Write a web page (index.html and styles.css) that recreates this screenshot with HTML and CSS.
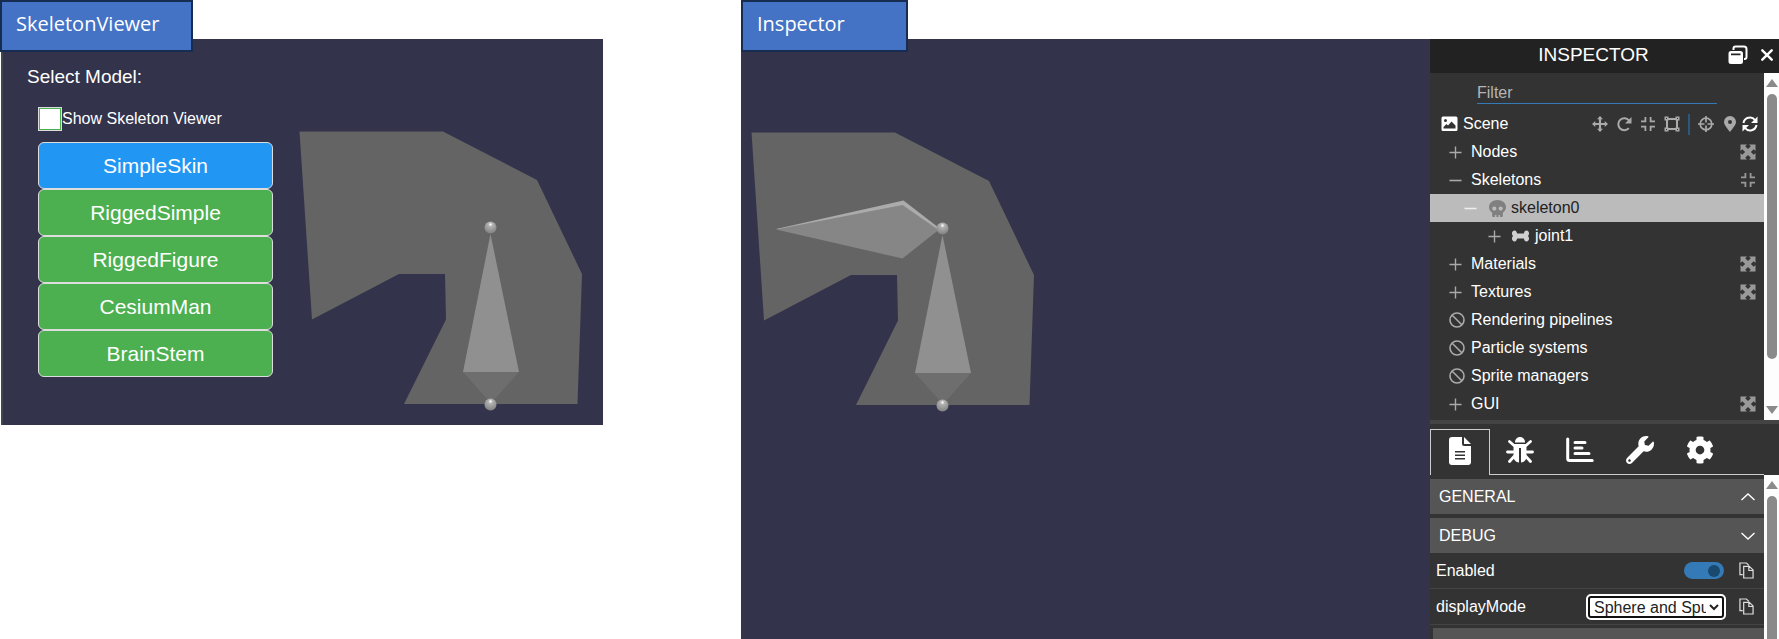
FILE: index.html
```
<!DOCTYPE html>
<html lang="en">
<head>
  <meta charset="UTF-8" />
  <title>Skeleton Viewer</title>
  <meta name="viewport" content="width=device-width, initial-scale=1.0">
  <link rel="stylesheet" href="styles.css">
</head>
<body>
  <!-- Shared shapes -->
  <svg class="defs" aria-hidden="true">
    <defs>
      <radialGradient id="ball" cx="50%" cy="25%" r="75%">
        <stop offset="0" stop-color="#fff" />
        <stop offset="0.25" stop-color="#b0b0b0" />
        <stop offset="1" stop-color="#808080" />
      </radialGradient>
      <symbol id="mesh" viewBox="298 130 288 284">
        <path fill="#646464" d="M299.5 131.5H443L537 180l45 94-4.500 130H404l42-84.500-1-45.500h-46l-87 45.500z" />
      </symbol>
      <symbol id="bone" viewBox="298 130 288 284">
        <path fill="#909090" d="M490.500 234L463 372h56z" />
        <path fill="#6e6e6e" d="M463 372h56l-25 28h-6z" />
        <circle cx="490.500" cy="227.500" r="6" fill="url(#ball)" />
        <circle cx="490.500" cy="404.500" r="6" fill="url(#ball)" />
      </symbol>
      <symbol id="plus" viewBox="0 0 14 14">
        <path d="M7 0.500v13M0.500 7h13" fill="none" stroke="currentColor" stroke-width="1.500" />
      </symbol>
      <symbol id="minus" viewBox="0 0 14 14">
        <path d="M0.500 7h13" fill="none" stroke="currentColor" stroke-width="1.700" />
      </symbol>
      <symbol id="ban" viewBox="0 0 16 16">
        <circle cx="8" cy="8" r="7" fill="none" stroke="currentColor" stroke-width="1.600" />
        <path d="M3.200 3.200l9.600 9.600" stroke="currentColor" stroke-width="1.600" />
      </symbol>
      <symbol id="expand" viewBox="0 0 16 16">
        <path fill="currentColor" d="M0.500 0.500h6.500L5.200 2.300 8 5.100l2.800-2.800L9 0.500h6.500V7l-1.800-1.800L10.900 8l2.800 2.800L15.500 9v6.500H9l1.800-1.800L8 10.900l-2.800 2.800L7 15.500H0.500V9l1.800 1.800L5.100 8 2.300 5.200 0.500 7z" />
      </symbol>
      <symbol id="compress" viewBox="0 0 16 16">
        <path fill="none" stroke="currentColor" stroke-width="1.800" d="M5.400 1v4.400H1M10.600 1v4.400H15M5.400 15v-4.400H1M10.600 15v-4.400H15" />
      </symbol>
      <symbol id="copy" viewBox="0 0 16 18">
        <path fill="none" stroke="currentColor" stroke-width="1.300" d="M4 13.500H1V1h7l2.500 2.500M5 4.500h6l4 4V17H5zM10.500 4.500V9H15" />
      </symbol>
    </defs>
  </svg>

  <div class="page">
    <!-- Skeleton viewer -->
    <section class="sample">
      <h2 class="badge badge-viewer">SkeletonViewer</h2>
      <div class="viewer">
        <div class="models">
          <p class="models-title">Select Model:</p>
          <div class="models-list">
            <label class="show"><input type="checkbox" class="show-box">Show Skeleton Viewer</label>
            <button class="model active">SimpleSkin</button>
            <button class="model">RiggedSimple</button>
            <button class="model">RiggedFigure</button>
            <button class="model">CesiumMan</button>
            <button class="model">BrainStem</button>
          </div>
        </div>
        <svg class="scene" viewBox="298 130 288 284">
          <use href="#mesh" x="298" y="130" width="288" height="284" />
          <use href="#bone" x="298" y="130" width="288" height="284" />
        </svg>
      </div>
    </section>

    <!-- Inspector -->
    <section class="sample">
      <h2 class="badge badge-inspector">Inspector</h2>
      <div class="workspace">
        <div class="stage">
          <svg class="scene" viewBox="298 130 288 284">
            <use href="#mesh" x="298" y="130" width="288" height="284" />
            <path fill="#ababab" d="M324 228l127.500-28.500 35 27v3z" />
            <path fill="#868686" d="M324 228.500l126.500-24.500 36 25-36 28.500z" />
            <use href="#bone" x="298" y="130" width="288" height="284" />
          </svg>
        </div>

        <aside class="inspector">
          <header class="inspector-head">
            <span class="inspector-title">INSPECTOR</span>
            <button class="icon-btn" aria-label="Pop out">
              <svg width="20" height="20" viewBox="0 0 20 20">
                <path fill="none" stroke="#fff" stroke-width="2" d="M5.500 5V3.500a2 2 0 0 1 2-2H16a2.500 2.500 0 0 1 2.500 2.500v8a2 2 0 0 1-2 2H16" />
                <path fill="#fff" fill-rule="evenodd" d="M3 6h9.500a2.500 2.500 0 0 1 2.500 2.500v8a2.500 2.500 0 0 1-2.500 2.500H3a2.500 2.500 0 0 1-2.500-2.500v-8A2.500 2.500 0 0 1 3 6zM3 8.500v1.800h9.500V8.500z" />
              </svg>
            </button>
            <button class="icon-btn" aria-label="Close">
              <svg width="12" height="12" viewBox="0 0 12 12"><path stroke="#fff" stroke-width="2.400" stroke-linecap="round" d="M1.300 1.300l9.400 9.400M10.700 1.300l-9.400 9.400" /></svg>
            </button>
          </header>

          <div class="pane explorer">
            <div class="pane-body">
              <input type="text" class="filter" placeholder="Filter" aria-label="Filter">
              <div class="row row-scene">
                <svg width="17" height="16" viewBox="0 0 17 16"><path fill="#fff" fill-rule="evenodd" d="M2 0.500h13A1.500 1.500 0 0 1 16.500 2v11.500A1.500 1.500 0 0 1 15 15H2a1.500 1.500 0 0 1-1.500-1.500V2A1.500 1.500 0 0 1 2 0.500zM2.500 12.500h12V9.500L10.500 5.500 7 9.500 5.500 8l-3 3zM4.500 3A1.500 1.500 0 1 0 4.500 6 1.500 1.500 0 0 0 4.500 3z" /></svg>
                <span class="label">Scene</span>
                <div class="tools">
                  <button class="icon-btn" aria-label="Position"><svg width="16" height="16" viewBox="0 0 16 16"><path fill="currentColor" d="M8 0l3 3.300H9.100v3.600h3.600V5L16 8l-3.300 3V9.100H9.100v3.600H11L8 16l-3-3.300h1.900V9.100H3.300V11L0 8l3.300-3v1.900h3.600V3.300H5z" /></svg></button>
                  <button class="icon-btn" aria-label="Rotation"><svg width="16" height="16" viewBox="0 0 16 16"><path fill="none" stroke="currentColor" stroke-width="2" d="M12.800 12.200A6 6 0 1 1 13 4.500" /><path fill="currentColor" d="M15.500 1v6.500H9z" /></svg></button>
                  <button class="icon-btn" aria-label="Scale"><svg width="16" height="16"><use href="#compress" /></svg></button>
                  <button class="icon-btn" aria-label="Bounding box"><svg width="16" height="16" viewBox="0 0 16 16"><path fill="none" stroke="currentColor" stroke-width="2" d="M3 3h10v10H3z" /><path fill="currentColor" d="M0.500 0.500h4v4h-4zM11.500 0.500h4v4h-4zM0.500 11.500h4v4h-4zM11.500 11.500h4v4h-4z" /><path fill="#333" d="M2 2h1v1H2zM13 2h1v1h-1zM2 13h1v1H2zM13 13h1v1h-1z" /></svg></button>
                  <span class="tools-line"></span>
                  <button class="icon-btn" aria-label="Pick"><svg width="16" height="16" viewBox="0 0 16 16"><circle cx="8" cy="8" r="5.800" fill="none" stroke="currentColor" stroke-width="1.700" /><path stroke="currentColor" stroke-width="1.700" d="M8 0v6.500M8 9.500V16M0 8h6.500M9.500 8H16" /></svg></button>
                  <button class="icon-btn" aria-label="Pin"><svg width="16" height="16" viewBox="0 0 16 16"><path fill="currentColor" fill-rule="evenodd" d="M8 0a6 6 0 0 1 6 6c0 3-3.500 6.500-6 10-2.500-3.500-6-7-6-10a6 6 0 0 1 6-6zM8 4a2 2 0 1 0 0 4 2 2 0 0 0 0-4z" /></svg></button>
                  <button class="icon-btn refresh" aria-label="Refresh"><svg width="16" height="16" viewBox="0 0 16 16"><path fill="none" stroke="currentColor" stroke-width="2" d="M1.500 7A6.500 6.500 0 0 1 13 4M14.500 9A6.500 6.500 0 0 1 3 12" /><path fill="currentColor" d="M15.500 0.500V7H9zM0.500 15.500V9H7z" /></svg></button>
                </div>
              </div>
              <div class="row"><svg class="sign"><use href="#plus" /></svg><span class="label">Nodes</span><svg class="end"><use href="#expand" /></svg></div>
              <div class="row"><svg class="sign"><use href="#minus" /></svg><span class="label">Skeletons</span><svg class="end"><use href="#compress" /></svg></div>
              <div class="row row-sub selected">
                <svg class="sign"><use href="#minus" /></svg>
                <svg class="kind" viewBox="0 0 16 16"><path fill="#808080" fill-rule="evenodd" d="M8 0c4.500 0 8 2.900 8 6.700 0 2.200-1.200 4-3 5.200V15a1 1 0 0 1-1 1h-1.600v-2H9v2H7v-2H5.600v2H4a1 1 0 0 1-1-1v-3.100c-1.800-1.200-3-3-3-5.200C0 2.900 3.500 0 8 0zM5 6a2 2 0 1 0 0 4 2 2 0 0 0 0-4zM11 6a2 2 0 1 0 0 4 2 2 0 0 0 0-4z" /></svg>
                <span class="label">skeleton0</span>
              </div>
              <div class="row row-leaf">
                <svg class="sign"><use href="#plus" /></svg>
                <svg class="kind kind-bone" viewBox="0 0 18 12"><path fill="#d0d0d0" d="M3 0.500C4.700 0.500 5.300 2 5.600 3.500h6.800C12.700 2 13.300 0.500 15 0.500c2.500 0 3.500 3.500 1.500 5.500 2 2 1 5.500-1.500 5.500-1.700 0-2.300-1.500-2.600-3H5.600c-0.300 1.500-0.900 3-2.600 3-2.500 0-3.500-3.500-1.500-5.500-2-2-1-5.500 1.500-5.500z" /></svg>
                <span class="label">joint1</span>
              </div>
              <div class="row"><svg class="sign"><use href="#plus" /></svg><span class="label">Materials</span><svg class="end"><use href="#expand" /></svg></div>
              <div class="row"><svg class="sign"><use href="#plus" /></svg><span class="label">Textures</span><svg class="end"><use href="#expand" /></svg></div>
              <div class="row"><svg class="sign sign-ban"><use href="#ban" /></svg><span class="label">Rendering pipelines</span></div>
              <div class="row"><svg class="sign sign-ban"><use href="#ban" /></svg><span class="label">Particle systems</span></div>
              <div class="row"><svg class="sign sign-ban"><use href="#ban" /></svg><span class="label">Sprite managers</span></div>
              <div class="row"><svg class="sign"><use href="#plus" /></svg><span class="label">GUI</span><svg class="end"><use href="#expand" /></svg></div>
            </div>
            <div class="scrollbar">
              <span class="arrow-up"></span>
              <span class="thumb"></span>
              <span class="arrow-down"></span>
            </div>
          </div>

          <nav class="tabs">
            <button class="tab current" aria-label="Properties">
              <svg width="22" height="28" viewBox="0 0 22 28"><path fill="#fff" fill-rule="evenodd" d="M3 0h10v7a2 2 0 0 0 2 2h7v16a3 3 0 0 1-3 3H3a3 3 0 0 1-3-3V3a3 3 0 0 1 3-3zM15 0l7 7h-7zM6 14v1.500h10V14zM6 17.500V19h10v-1.500zM6 21v1.500h10V21z" /></svg>
            </button>
            <button class="tab" aria-label="Debug">
              <svg width="28" height="28" viewBox="0 0 28 28"><path fill="#fff" d="M9 6a5 5 0 0 1 10 0v0.500H9zM7.500 8H20.500v12a6 6 0 0 1-5.500 6.500V12h-2v14.500A6 6 0 0 1 7.500 20z" /><path fill="none" stroke="#fff" stroke-width="2.800" stroke-linecap="round" d="M8 9.500L3.500 5.500M20 9.500L24.500 5.500M7 16H1.500M21 16h5.500M8 20.500l-4.500 5M20 20.500l4.500 5" /></svg>
            </button>
            <button class="tab" aria-label="Statistics">
              <svg width="28" height="26" viewBox="0 0 28 26"><path fill="none" stroke="#fff" stroke-width="3" stroke-linecap="round" stroke-linejoin="round" d="M1.700 2v19.500a2 2 0 0 0 2 2h22.500M9 5.500h10M9 11h7M9 16.500h14" /></svg>
            </button>
            <button class="tab" aria-label="Tools">
              <svg width="28" height="28" viewBox="0 0 512 512"><path fill="#fff" d="M507.730 109.100c-2.240-9.030-13.540-12.090-20.120-5.510l-74.360 74.360-67.880-11.310-11.310-67.880 74.360-74.360c6.620-6.620 3.430-17.900-5.660-20.160-47.380-11.740-99.550.910-136.580 37.930-39.640 39.640-50.550 97.100-34.050 147.200L18.740 402.760c-24.990 24.990-24.990 65.510 0 90.500 24.990 24.990 65.510 24.990 90.500 0l213.210-213.210c50.120 16.710 107.470 5.680 147.370-34.220 37.070-37.070 49.700-89.320 37.910-136.730zM64 472c-13.250 0-24-10.750-24-24 0-13.260 10.750-24 24-24s24 10.740 24 24c0 13.250-10.750 24-24 24z" /></svg>
            </button>
            <button class="tab" aria-label="Settings">
              <svg width="28" height="28" viewBox="0 0 512 512"><path fill="#fff" d="M487.400 315.700l-42.600-24.600c4.300-23.200 4.300-47 0-70.200l42.600-24.600c4.900-2.800 7.100-8.600 5.500-14-11.100-35.600-30-67.800-54.700-94.600-3.800-4.100-10-5.100-14.800-2.300L380.800 110c-17.900-15.400-38.500-27.300-60.800-35.100V25.800c0-5.600-3.900-10.500-9.400-11.700-36.700-8.200-74.300-7.800-109.200 0-5.500 1.200-9.400 6.100-9.400 11.700V75c-22.200 7.900-42.800 19.800-60.800 35.100L88.700 85.500c-4.900-2.800-11-1.900-14.800 2.300-24.700 26.700-43.600 58.900-54.700 94.600-1.700 5.400.6 11.200 5.500 14L67.300 221c-4.300 23.200-4.300 47 0 70.200l-42.600 24.600c-4.900 2.800-7.100 8.600-5.500 14 11.100 35.600 30 67.800 54.700 94.600 3.800 4.100 10 5.100 14.800 2.300l42.600-24.600c17.900 15.400 38.500 27.300 60.800 35.100v49.200c0 5.600 3.900 10.500 9.400 11.700 36.700 8.200 74.300 7.800 109.200 0 5.500-1.200 9.400-6.100 9.400-11.700v-49.200c22.200-7.900 42.800-19.800 60.800-35.100l42.600 24.600c4.900 2.800 11 1.900 14.800-2.300 24.700-26.700 43.600-58.900 54.700-94.600 1.500-5.500-.7-11.300-5.600-14.100zM256 336c-44.100 0-80-35.900-80-80s35.900-80 80-80 80 35.900 80 80-35.900 80-80 80z" /></svg>
            </button>
          </nav>

          <div class="pane properties">
            <div class="pane-body">
              <button class="group">GENERAL
                <svg width="14" height="8" viewBox="0 0 14 8"><path fill="none" stroke="#fff" stroke-width="1.400" d="M0.500 7L7 1l6.500 6" /></svg>
              </button>
              <button class="group">DEBUG
                <svg width="14" height="8" viewBox="0 0 14 8"><path fill="none" stroke="#fff" stroke-width="1.400" d="M0.500 1L7 7l6.500-6" /></svg>
              </button>
              <div class="prop">
                <label for="enabled">Enabled</label>
                <input type="checkbox" class="toggle" id="enabled" checked>
                <button class="icon-btn" aria-label="Copy Enabled"><svg width="15" height="17"><use href="#copy" /></svg></button>
              </div>
              <div class="prop">
                <label for="displayMode">displayMode</label>
                <select class="mode" id="displayMode">
                  <option>Sphere and Spurs</option>
                  <option>Lines</option>
                  <option>Spheres</option>
                </select>
                <button class="icon-btn" aria-label="Copy displayMode"><svg width="15" height="17"><use href="#copy" /></svg></button>
              </div>
              <div class="group group-inner"></div>
            </div>
            <div class="scrollbar">
              <span class="arrow-up"></span>
              <span class="thumb thumb-long"></span>
            </div>
          </div>
        </aside>
      </div>
    </section>
  </div>
</body>
</html>
```
FILE: styles.css
```
* {
  box-sizing: border-box;
}
body {
  margin: 0;
  background: #fff;
  color: #fff;
  font-family: "Liberation Sans", Arial, sans-serif;
}
button, input, select {
  font-family: inherit;
  margin: 0;
}
svg {
  display: block;
  flex: none;
}
.defs {
  position: absolute;
  width: 0;
  height: 0;
}
.page {
  display: grid;
  grid-template-columns: 603fr 1038fr;
  grid-template-rows: 100%;
  column-gap: 138px;
  height: 100vh;
  overflow: hidden;
}
.sample {
  position: relative;
  display: flex;
  flex-direction: column;
  align-items: stretch;
  padding-top: 39px;
  min-width: 0;
  min-height: 0;
}
.badge {
  position: absolute;
  top: 0;
  left: 0;
  margin: 0;
  padding: 0 14px;
  height: 52px;
  border: 2px solid #172c51;
  background: #4472c4;
  font: 20px/44px "Open Sans", "Noto Sans", sans-serif;
}
.badge-viewer {
  width: 193px;
}
.badge-inspector {
  width: 167px;
}

/* Skeleton viewer */
.viewer {
  display: flex;
  margin-left: 1px;
  padding-bottom: 11px;
  background: #33334c;
  border-left: 2px solid #40474b;
}
.models {
  width: 295px;
  padding: 25px 24px 30px;
}
.models-title {
  margin: 0;
  font-size: 19px;
  line-height: 26px;
}
.models-list {
  display: flex;
  flex-direction: column;
  width: 235px;
  margin: 17px 0 0 11px;
}
.show {
  display: flex;
  align-items: center;
  margin-bottom: 11px;
  font-size: 16px;
  line-height: 24px;
}
.show-box {
  appearance: none;
  width: 24px;
  height: 24px;
  background: #fff;
  border: 1px solid #ddd;
  box-shadow: inset 0 0 0 1px #4caf50;
}
.model {
  height: 47px;
  padding: 0;
  border: 1px solid #ddd;
  border-radius: 6px;
  background: #4caf50;
  color: #fff;
  font-size: 21px;
}
.active {
  background: #2196f3;
}
.scene {
  width: 288px;
  height: 284px;
}
.viewer .scene {
  margin-top: 91px;
}

/* Inspector */
.workspace {
  display: flex;
  flex: 1;
  min-height: 0;
  background: #33334c;
}
.stage {
  flex: 1;
  padding: 92px 9px;
}
.inspector {
  display: flex;
  flex-direction: column;
  width: 349px;
  background: #333;
  overflow: hidden;
}
.inspector-head {
  display: flex;
  align-items: center;
  gap: 13px;
  height: 34px;
  flex: none;
  padding: 0 6px 2px 0;
  background: #222;
}
.inspector-title {
  flex: 1;
  padding-left: 42px;
  text-align: center;
  font-size: 19px;
  line-height: 24px;
}
.icon-btn {
  display: flex;
  padding: 0;
  border: none;
  background: none;
  color: #aaa;
}
.pane {
  display: flex;
}
.pane-body {
  flex: 1;
  min-width: 0;
}
.explorer {
  flex: none;
  padding: 0;
  border-bottom: 4px solid #444;
}
.filter {
  display: block;
  width: 240px;
  height: 21px;
  margin: 10px 0 6px 47px;
  padding: 0;
  border: none;
  border-bottom: 1px solid #337ab7;
  background: none;
  color: #fff;
  font-size: 16px;
}
.filter::placeholder {
  color: #b5b5b5;
}
.row {
  display: flex;
  align-items: center;
  height: 28px;
  padding: 0 8px 0 19px;
  font-size: 16px;
}
.row-scene {
  padding: 0 6px 0 11px;
}
.row-sub {
  padding-left: 34px;
}
.row-leaf {
  padding-left: 58px;
}
.explorer .row:last-child {
  margin-bottom: 2px;
}
.label {
  margin-left: 5px;
}
.sign {
  width: 13px;
  height: 13px;
  margin-right: 4px;
  color: #aaa;
}
.sign-ban {
  width: 16px;
  height: 16px;
  margin-right: 1px;
}
.kind {
  width: 17px;
  height: 17px;
  margin-left: 8px;
}
.kind-bone {
  width: 19px;
  height: 12px;
  margin-left: 6px;
}
.end {
  width: 16px;
  height: 16px;
  margin-left: auto;
  color: #999;
}
.selected {
  background: #bbb;
  color: #222;
}
.selected .sign {
  color: #eee;
}
.tools {
  display: flex;
  align-items: center;
  gap: 8px;
  margin-left: auto;
}
.tools-line {
  width: 2px;
  height: 21px;
  background: #2b587f;
}
.refresh {
  margin-left: -4px;
  color: #fff;
}
.scrollbar {
  display: flex;
  flex-direction: column;
  align-items: center;
  width: 15px;
  padding: 6px 0;
  background: #fdfdfd;
}
.arrow-up, .arrow-down {
  border: 6px solid transparent;
  border-top: none;
  border-bottom: 8px solid #8a8a8a;
}
.arrow-down {
  margin-top: auto;
  border-bottom: none;
  border-top: 8px solid #8a8a8a;
}
.thumb {
  width: 10px;
  height: 79%;
  margin-top: 7px;
  border-radius: 5px;
  background: #8a8a8a;
}
.thumb-long {
  height: 100%;
  margin-bottom: -12px;
}
.tabs {
  display: flex;
  flex: none;
  height: 51px;
  padding-top: 5px;
}
.tabs::after {
  content: "";
  flex: 1;
  margin-right: 15px;
  border-bottom: 1px solid #ccc;
}
.tab {
  display: flex;
  align-items: center;
  justify-content: center;
  width: 60px;
  padding: 0 0 3px;
  border: none;
  border-bottom: 1px solid #ccc;
  background: none;
}
.current {
  border: 1px solid #ccc;
  border-bottom: none;
}
.properties {
  flex: 1;
  min-height: 0;
  overflow: hidden;
}
.properties .pane-body {
  padding-top: 4px;
}
.group {
  display: flex;
  align-items: center;
  justify-content: space-between;
  width: 100%;
  height: 35px;
  margin-bottom: 4px;
  padding: 0 9px;
  border: none;
  background: #555;
  color: #fff;
  font-size: 16px;
}
.group + .prop {
  margin-top: -4px;
}
.group-inner {
  width: auto;
  margin: 3px 0 0 3px;
}
.prop {
  display: flex;
  align-items: center;
  gap: 15px;
  height: 36px;
  padding: 0 10px 0 6px;
  border-bottom: 1px solid #444;
  font-size: 16px;
}
.prop label {
  margin-right: auto;
}
.prop .icon-btn {
  color: #ddd;
}
.toggle {
  appearance: none;
  display: flex;
  align-items: center;
  justify-content: flex-end;
  width: 40px;
  height: 17px;
  padding: 0 4px;
  border-radius: 9px;
  background: #337ab7;
}
.toggle::after {
  content: "";
  width: 12px;
  height: 12px;
  border-radius: 50%;
  background: #19496f;
}
.mode {
  width: 136px;
  height: 22px;
  padding: 0;
  border: 2px solid #101010;
  border-radius: 3px;
  outline: 2px solid #fff;
  background: #fff;
  color: #222;
  font-size: 16px;
  line-height: 18px;
}
```
